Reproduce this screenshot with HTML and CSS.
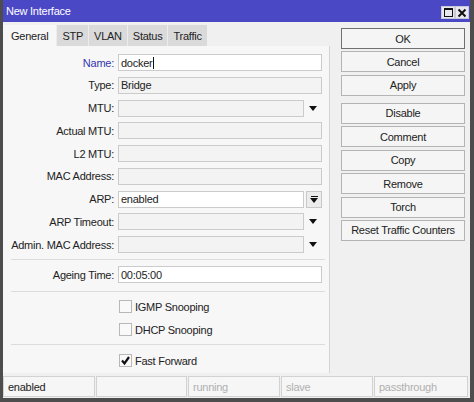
FILE: index.html
```html
<!DOCTYPE html>
<html>
<head>
<meta charset="utf-8">
<link rel="stylesheet" href="styles.css">
</head>
<body>
<div class="window">
  <div class="titlebar">
    <span class="title">New Interface</span>
    <div class="tbtns">
      <span class="tb"><span class="maxicon"></span></span>
      <span class="tb"><svg width="10" height="10" viewBox="0 0 10 10"><path d="M1.5 1.5 L8.5 8.5 M8.5 1.5 L1.5 8.5" stroke="#111" stroke-width="2"/></svg></span>
    </div>
  </div>
  <div class="main">
    <div class="content">
      <div class="left">
        <div class="tabs">
          <span class="tab active">General</span>
          <span class="tab">STP</span>
          <span class="tab">VLAN</span>
          <span class="tab">Status</span>
          <span class="tab">Traffic</span>
        </div>
        <div class="panel">
          <div class="rows">
            <div class="row"><span class="lbl blue">Name:</span><span class="inp white full">docker<span class="caret"></span></span></div>
            <div class="row"><span class="lbl">Type:</span><span class="inp full">Bridge</span></div>
            <div class="row"><span class="lbl">MTU:</span><span class="inp short"></span><span class="dd"><span class="tri"></span></span></div>
            <div class="row"><span class="lbl">Actual MTU:</span><span class="inp full"></span></div>
            <div class="row"><span class="lbl">L2 MTU:</span><span class="inp full"></span></div>
            <div class="row"><span class="lbl">MAC Address:</span><span class="inp full"></span></div>
            <div class="row"><span class="lbl">ARP:</span><span class="inp white short">enabled</span><span class="btnsm"><span class="bar"></span><span class="tri"></span></span></div>
            <div class="row"><span class="lbl">ARP Timeout:</span><span class="inp short"></span><span class="dd"><span class="tri"></span></span></div>
            <div class="row"><span class="lbl">Admin. MAC Address:</span><span class="inp short"></span><span class="dd"><span class="tri"></span></span></div>
          </div>
          <div class="sep s1"></div>
          <div class="row ageing"><span class="lbl">Ageing Time:</span><span class="inp white full">00:05:00</span></div>
          <div class="sep s2"></div>
          <div class="check c1"><span class="box"></span><span class="ctext">IGMP Snooping</span></div>
          <div class="check c2"><span class="box"></span><span class="ctext">DHCP Snooping</span></div>
          <div class="sep s3"></div>
          <div class="check c3"><span class="box"><svg width="11" height="11" viewBox="0 0 11 11"><path d="M2 5.5 L4.5 8.5 L9 2" stroke="#111" stroke-width="2.2" fill="none"/></svg></span><span class="ctext">Fast Forward</span></div>
        </div>
      </div>
      <div class="buttons">
        <span class="btn default">OK</span>
        <span class="btn">Cancel</span>
        <span class="btn">Apply</span>
        <span class="btn gap">Disable</span>
        <span class="btn">Comment</span>
        <span class="btn">Copy</span>
        <span class="btn">Remove</span>
        <span class="btn">Torch</span>
        <span class="btn">Reset Traffic Counters</span>
      </div>
    </div>
    <div class="status">
      <span class="cell dark">enabled</span>
      <span class="cell"></span>
      <span class="cell">running</span>
      <span class="cell">slave</span>
      <span class="cell">passthrough</span>
    </div>
  </div>
</div>
</body>
</html>
```
FILE: styles.css
```css
* { box-sizing: border-box; }
html, body { margin: 0; padding: 0; }
body {
  width: 474px;
  height: 402px;
  overflow: hidden;
  font-family: "Liberation Sans", Arial, sans-serif;
  font-size: 11px;
  letter-spacing: -0.25px;
  color: #222;
  background: #4a4a4a;
}
.window {
  width: 474px;
  height: 402px;
  border-left: 3px solid #4d4d4d;
  border-right: 4px solid #4d4d4d;
  border-bottom: 4px solid #4d4d4d;
  display: flex;
  flex-direction: column;
}
.titlebar {
  height: 22px;
  background: #4b48c6;
  display: flex;
  align-items: center;
  justify-content: space-between;
  padding-left: 3px;
  padding-right: 1px;
}
.title { color: #fff; font-size: 11px; }
.tbtns { display: flex; gap: 0; margin-top: 3px; }
.tb {
  width: 14px;
  height: 13px;
  background: #e8e8ee;
  border: 1px solid #c8c8d8;
  display: flex;
  align-items: center;
  justify-content: center;
}
.maxicon {
  width: 9px;
  height: 9px;
  border: 1px solid #111;
  border-top-width: 2px;
}
.main {
  flex: 1;
  background: #f0f0f0;
  display: flex;
  flex-direction: column;
}
.content { display: flex; flex: 1; }
.left { width: 327px; display: flex; flex-direction: column; }
.tabs { display: flex; margin-top: 3px; height: 21px; }
.tab {
  display: flex;
  align-items: center;
  padding: 0 5px;
  background: #dadada;
  border-left: 1px solid #ececec;
}
.tab.active { background: #f7f7f7; padding: 0 8px; border-left: none; }
.panel {
  background: #f7f7f7;
  border-right: 1px solid #d4d4d4;
  height: 327px;
  padding-top: 8px;
  display: flex;
  flex-direction: column;
}
.rows { display: flex; flex-direction: column; gap: 5.75px; }
.row { display: flex; align-items: center; height: 17px; }
.lbl { width: 111px; text-align: right; padding-right: 0; flex: none; }
.blue { color: #3535b0; }
.inp {
  margin-left: 4px;
  height: 17px;
  border: 1px solid #cbcbcb;
  background: #f3f3f3;
  display: flex;
  align-items: center;
  padding-left: 2px;
  flex: none;
}
.inp.white { background: #fff; }
.full { width: 204px; }
.short { width: 186px; }
.caret { width: 1px; height: 12px; background: #111; margin-left: 0; }
.dd { width: 18px; height: 17px; display: flex; align-items: center; justify-content: center; }
.tri {
  width: 0; height: 0;
  border-left: 4px solid transparent;
  border-right: 4px solid transparent;
  border-top: 5px solid #111;
}
.btnsm {
  margin-left: 2px;
  width: 16px;
  height: 17px;
  border: 1px solid #c8c8c8;
  background: #ececec;
  display: flex;
  flex-direction: column;
  align-items: center;
  justify-content: center;
  gap: 1px;
}
.bar { width: 7px; height: 1px; background: #111; }
.sep { height: 1px; background: #dcdcdc; margin-left: 8px; width: 314px; }
.s1 { margin-top: 6px; }
.ageing { margin-top: 6px; }
.s2 { margin-top: 8px; }
.check { display: flex; align-items: center; height: 13px; padding-left: 116px; }
.c1 { margin-top: 8px; }
.c2 { margin-top: 10px; }
.s3 { margin-top: 8px; }
.c3 { margin-top: 9px; }
.box {
  width: 13px; height: 13px;
  border: 1px solid #b8b8b8;
  background: #f9f9f9;
  display: flex; align-items: center; justify-content: center;
}
.ctext { margin-left: 3px; }
.buttons {
  margin-left: 11px;
  margin-top: 6px;
  width: 124px;
  display: flex;
  flex-direction: column;
  gap: 2.4px;
}
.btn {
  height: 21px;
  border: 1px solid #b4b4b4;
  background: #f5f5f5;
  display: flex;
  align-items: center;
  justify-content: center;
}
.btn.default { border-color: #707070; }
.btn.gap { margin-top: 4.8px; }
.status {
  height: 21px;
  margin-bottom: 1px;
  display: grid;
  grid-template-columns: 92px 91px 92px 92px 94px;
  column-gap: 1px;
}
.cell {
  border: 1px solid #d2d2d2;
  background: #f6f6f6;
  color: #b0b0b0;
  display: flex;
  align-items: center;
  padding-left: 4px;
}
.cell.dark { color: #222; }
```
